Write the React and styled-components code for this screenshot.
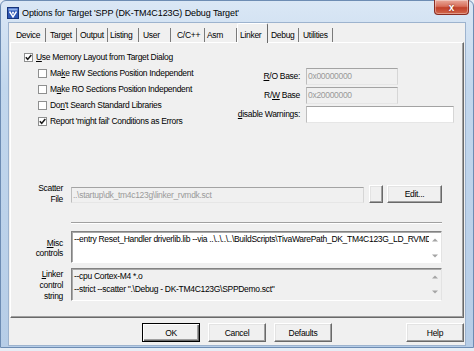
import React from 'react';
import styled, { createGlobalStyle, css } from 'styled-components';

const GlobalStyle = createGlobalStyle`
  html, body {
    margin: 0;
    padding: 0;
    background: #e6edf5;
  }
  body {
    font-family: "Liberation Sans", Arial, sans-serif;
    font-size: 8.5px;
    letter-spacing: -0.3px;
    color: #000;
  }
  * { box-sizing: border-box; }
`;

const raised = css`
  border: 1px solid;
  border-color: #ffffff #696969 #696969 #ffffff;
  box-shadow: inset -1px -1px 0 #a0a0a0, inset 1px 1px 0 #e3e3e3;
`;

const sunken = css`
  border: 1px solid;
  border-color: #828282 #e3e3e3 #ffffff #828282;
  box-shadow: inset 1px 1px 0 #a9a9a9;
`;

const Window = styled.div`
  width: 474px;
  height: 348px;
  display: flex;
  flex-direction: column;
  border: 1px solid #6d8cb3;
  border-radius: 6px 6px 0 0;
  background: linear-gradient(to bottom, #dae7f5 0%, #c2d7ed 25%, #b6cde7 100%);
`;

const TitleBar = styled.div`
  height: 21px;
  display: flex;
  align-items: center;
  gap: 3px;
  padding: 2px 4px 0 6px;
`;

const Title = styled.div`
  font-size: 9px;
  letter-spacing: -0.1px;
  color: #000;
  white-space: nowrap;
`;

const CloseButton = styled.div`
  margin-left: auto;
  align-self: flex-start;
  margin-top: -3px;
  width: 35px;
  height: 15px;
  border: 1px solid #8a2d22;
  border-top: none;
  border-radius: 0 0 4px 4px;
  background: linear-gradient(to bottom, #e9a99b 0%, #d8705c 45%, #c1402a 55%, #d2684c 100%);
  box-shadow: inset 0 0 0 1px rgba(255, 255, 255, 0.35);
  color: #fff;
  font-weight: bold;
  font-size: 10px;
  display: flex;
  align-items: center;
  justify-content: center;
  text-shadow: 0 0 2px #6a1a10;
`;

const Frame = styled.div`
  flex: 1;
  display: flex;
  padding: 0 7px 1px 7px;
`;

const Client = styled.div`
  flex: 1;
  display: flex;
  flex-direction: column;
  border: 1px solid #9db3ce;
  background: #f0f0f0;
`;

const TabStrip = styled.div`
  height: 19px;
  display: flex;
  align-items: flex-end;
  padding-left: 3px;
`;

const Tab = styled.div`
  width: ${p => p.$width}px;
  height: 14px;
  line-height: 14px;
  padding-left: ${p => p.$pad ?? 4}px;
  border-right: 1px solid #7a7a7a;
  white-space: nowrap;

  ${p => p.$active && css`
    position: relative;
    z-index: 1;
    height: 20px;
    margin-bottom: -1px;
    padding-top: 4px;
    background: #f0f0f0;
    border-left: 1px solid #ffffff;
    border-top: 1px solid #ffffff;
    border-right: 1px solid #696969;
    border-radius: 2px 2px 0 0;
  `}
`;

const Panel = styled.div`
  height: 276px;
  margin: 0 1px;
  border: 1px solid;
  border-color: #ffffff #696969 #696969 #ffffff;
  box-shadow: inset -1px -1px 0 #a0a0a0;
  display: flex;
  flex-direction: column;
`;

const TopSection = styled.div`
  display: flex;
  height: 142px;
`;

const OptionList = styled.div`
  width: 219px;
  padding: 6px 0 0 13px;
  display: flex;
  flex-direction: column;
`;

const OptionRow = styled.div`
  display: flex;
  align-items: center;
  gap: 3px;
  height: 16px;
  padding-left: ${p => (p.$indent ? 14 : 0)}px;
  white-space: nowrap;
`;

const Box = styled.span`
  flex: none;
  width: 9px;
  height: 9px;
  border: 1px solid #8e8f8f;
  background: #ffffff;
  display: inline-flex;
  align-items: center;
  justify-content: center;
`;

const Key = styled.span`
  text-decoration: underline;
`;

const BaseGrid = styled.div`
  display: grid;
  grid-template-columns: 70px auto;
  column-gap: 6px;
  row-gap: 2px;
  padding-top: 25px;
  align-content: start;
  justify-items: start;
`;

const FieldLabel = styled.div`
  justify-self: end;
  line-height: 17px;
  white-space: nowrap;
`;

const TextField = styled.div`
  width: ${p => p.$width}px;
  height: ${p => p.$height || 17}px;
  ${sunken};
  box-shadow: none;
  border-color: #a3a3a3 #d6d6d6 #e6e6e6 #bdbdbd;
  background: ${p => (p.$disabled ? '#f0f0f0' : '#ffffff')};
  color: #9a9a9a;
  padding: 0 1px;
  line-height: ${p => (p.$height || 17) - 2}px;
  white-space: nowrap;
  overflow: hidden;
  margin-top: ${p => p.$offset || 0}px;
`;

const FieldRow = styled.div`
  display: grid;
  grid-template-columns: 52px 371px;
  column-gap: 8px;
  align-items: start;
  margin-top: ${p => p.$gap || 0}px;
`;

const SideLabel = styled.div`
  text-align: right;
  line-height: ${p => p.$lh || 11}px;
  margin-top: ${p => p.$top || 0}px;
`;

const ScatterControls = styled.div`
  display: flex;
  align-items: flex-start;
`;

const PushButton = styled.div`
  width: ${p => p.$w}px;
  height: ${p => p.$h || 18}px;
  margin-left: ${p => p.$ml || 0}px;
  ${raised};
  background: #f0f0f0;
  display: flex;
  align-items: center;
  justify-content: center;
  white-space: nowrap;

  ${p => p.$default && css`
    border-color: #000;
    box-shadow: inset 1px 1px 0 #ffffff, inset -1px -1px 0 #696969, inset -2px -2px 0 #a0a0a0;
  `}
`;

const Separator = styled.div`
  height: 2px;
  border-top: 1px solid #a0a0a0;
  border-bottom: 1px solid #ffffff;
  width: 371px;
`;

const MemoBox = styled.div`
  height: ${p => p.$h}px;
  ${sunken};
  background: ${p => (p.$readOnly ? '#f0f0f0' : '#ffffff')};
  display: flex;
  overflow: hidden;
`;

const MemoText = styled.div`
  flex: 1;
  min-width: 0;
  overflow: hidden;
  white-space: nowrap;
  padding: ${p => p.$pt || 0}px 0 0 2px;
  line-height: ${p => p.$lh || 12}px;
`;

const ScrollArrows = styled.div`
  flex: none;
  width: 12px;
  display: flex;
  flex-direction: column;
  align-items: center;
  justify-content: space-between;
  padding: 6px 0 ${p => p.$pb || 4}px;
`;

const ButtonBar = styled.div`
  height: 27px;
  display: flex;
  align-items: flex-start;
  gap: 8px;
  padding: 5px 1px 0 133px;
`;

const HelpSlot = styled.div`
  margin-left: auto;
`;

const AppIcon = () => (
  <svg width="12" height="12" viewBox="0 0 12 12">
    <rect x="0.5" y="0.5" width="11" height="11" fill="#2d56b3" stroke="#16347a" />
    <rect x="1.5" y="1.5" width="9" height="2" fill="#8fb0ea" />
    <path d="M2.5 4.5 L6 10 L9.5 4.5" fill="none" stroke="#ffffff" strokeWidth="1.4" />
    <path d="M6 4.2 L7.2 5.8 L6 7.4 L4.8 5.8 Z" fill="#ffffff" />
  </svg>
);

const CheckBox = ({ checked }) => (
  <Box>
    {checked && (
      <svg width="7" height="7" viewBox="0 0 7 7">
        <path d="M0.8 3.3 L2.7 5.4 L6.3 1.1" fill="none" stroke="#1c1c1c" strokeWidth="1.6" />
      </svg>
    )}
  </Box>
);

const Arrow = ({ down }) => (
  <svg width="6" height="4" viewBox="0 0 6 4">
    <path d={down ? 'M0 0.5 L6 0.5 L3 3.5 Z' : 'M0 3.5 L6 3.5 L3 0.5 Z'} fill="#a4a4a4" />
  </svg>
);

const tabs = [
  { name: 'Device', width: 34 },
  { name: 'Target', width: 31 },
  { name: 'Output', width: 31, pad: 3 },
  { name: 'Listing', width: 31, pad: 2 },
  { name: 'User', width: 32 },
  { name: 'C/C++', width: 34, pad: 6 },
  { name: 'Asm', width: 32, pad: 2 },
  { name: 'Linker', width: 31, pad: 2, active: true },
  { name: 'Debug', width: 31, pad: 3 },
  { name: 'Utilities', width: 34 },
];

const miscText = '--entry Reset_Handler driverlib.lib --via ..\\..\\..\\..\\BuildScripts\\TivaWarePath_DK_TM4C123G_LD_RVMDK.via';
const scatterPath = '..\\startup\\dk_tm4c123g\\linker_rvmdk.sct';

export default function App() {
  return (
    <>
      <GlobalStyle />
      <Window>
        <TitleBar>
          <AppIcon />
          <Title>Options for Target 'SPP (DK-TM4C123G) Debug Target'</Title>
          <CloseButton>x</CloseButton>
        </TitleBar>
        <Frame>
          <Client>
            <TabStrip>
              {tabs.map(t => (
                <Tab key={t.name} $width={t.width} $pad={t.pad} $active={t.active}>
                  {t.name}
                </Tab>
              ))}
            </TabStrip>
            <Panel>
              <TopSection>
                <OptionList>
                  <OptionRow>
                    <CheckBox checked />
                    <span><Key>U</Key>se Memory Layout from Target Dialog</span>
                  </OptionRow>
                  <OptionRow $indent>
                    <CheckBox />
                    <span>Ma<Key>k</Key>e RW Sections Position Independent</span>
                  </OptionRow>
                  <OptionRow $indent>
                    <CheckBox />
                    <span>M<Key>a</Key>ke RO Sections Position Independent</span>
                  </OptionRow>
                  <OptionRow $indent>
                    <CheckBox />
                    <span>Do<Key>n</Key>'t Search Standard Libraries</span>
                  </OptionRow>
                  <OptionRow $indent>
                    <CheckBox checked />
                    <span>Report 'might fail' Conditions as Errors</span>
                  </OptionRow>
                </OptionList>
                <BaseGrid>
                  <FieldLabel><Key>R</Key>/O Base:</FieldLabel>
                  <TextField $width={92} $disabled>0x00000000</TextField>
                  <FieldLabel>R/<Key>W</Key> Base</FieldLabel>
                  <TextField $width={92} $disabled>0x20000000</TextField>
                  <FieldLabel><Key>d</Key>isable Warnings:</FieldLabel>
                  <TextField $width={148} />
                </BaseGrid>
              </TopSection>

              <FieldRow>
                <SideLabel $top={-2}>Scatter<br />File</SideLabel>
                <ScatterControls>
                  <TextField $width={293} $height={16} $offset={2} $disabled>{scatterPath}</TextField>
                  <PushButton $w={14} $ml={5} />
                  <PushButton $w={55} $ml={4}>Edit...</PushButton>
                </ScatterControls>
              </FieldRow>

              <FieldRow $gap={17}>
                <span />
                <Separator />
              </FieldRow>

              <FieldRow $gap={7}>
                <SideLabel $top={7} $lh={10}><Key>M</Key>isc<br />controls</SideLabel>
                <MemoBox $h={32}>
                  <MemoText $pt={1}>{miscText}</MemoText>
                  <ScrollArrows $pb={4}>
                    <Arrow />
                    <Arrow down />
                  </ScrollArrows>
                </MemoBox>
              </FieldRow>

              <FieldRow $gap={5}>
                <SideLabel $top={1}><Key>L</Key>inker<br />control<br />string</SideLabel>
                <MemoBox $h={33} $readOnly>
                  <MemoText $pt={1} $lh={13}>
                    --cpu Cortex-M4 *.o<br />
                    --strict --scatter ".\Debug - DK-TM4C123G\SPPDemo.sct"
                  </MemoText>
                  <ScrollArrows $pb={6}>
                    <Arrow />
                    <Arrow down />
                  </ScrollArrows>
                </MemoBox>
              </FieldRow>
            </Panel>
            <ButtonBar>
              <PushButton $w={58} $h={19} $default>OK</PushButton>
              <PushButton $w={58} $h={19}>Cancel</PushButton>
              <PushButton $w={58} $h={19}>Defaults</PushButton>
              <HelpSlot>
                <PushButton $w={58} $h={19}>Help</PushButton>
              </HelpSlot>
            </ButtonBar>
          </Client>
        </Frame>
      </Window>
    </>
  );
}
